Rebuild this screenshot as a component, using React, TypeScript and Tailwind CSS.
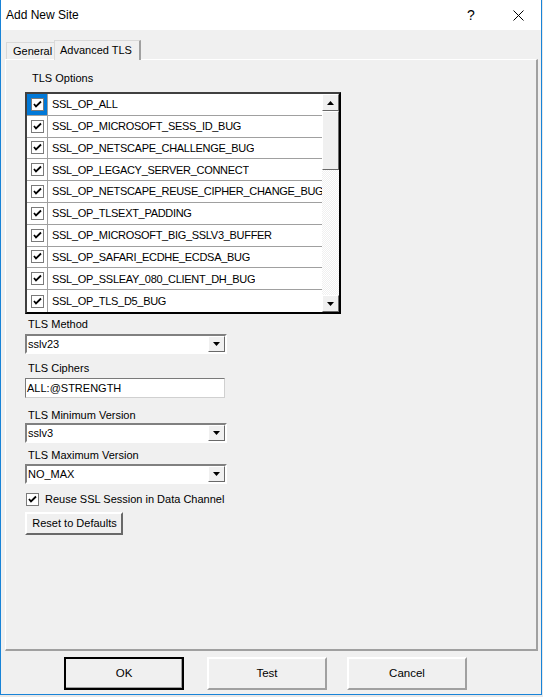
import React from "react";

const options = [
  "SSL_OP_ALL",
  "SSL_OP_MICROSOFT_SESS_ID_BUG",
  "SSL_OP_NETSCAPE_CHALLENGE_BUG",
  "SSL_OP_LEGACY_SERVER_CONNECT",
  "SSL_OP_NETSCAPE_REUSE_CIPHER_CHANGE_BUG",
  "SSL_OP_TLSEXT_PADDING",
  "SSL_OP_MICROSOFT_BIG_SSLV3_BUFFER",
  "SSL_OP_SAFARI_ECDHE_ECDSA_BUG",
  "SSL_OP_SSLEAY_080_CLIENT_DH_BUG",
  "SSL_OP_TLS_D5_BUG",
];

function Check() {
  return (
    <div className="w-[13px] h-[13px] border border-[#7a7a7a] bg-white flex items-center justify-center">
      <svg width="9" height="9" viewBox="0 0 9 9">
        <path d="M1 4 L3 6.5 L8 1.5" stroke="#000" strokeWidth="1.8" fill="none" />
      </svg>
    </div>
  );
}

function Arrow({ up }: { up?: boolean }) {
  return (
    <svg width="7" height="4" viewBox="0 0 7 4">
      <path d={up ? "M0 4 L3.5 0 L7 4 Z" : "M0 0 L7 0 L3.5 4 Z"} fill="#000" />
    </svg>
  );
}

function Combo({ value }: { value: string }) {
  return (
    <div className="w-[202px] h-[20px] border-2 border-t-[#808080] border-l-[#808080] border-b-white border-r-white bg-white flex items-center">
      <div className="flex-1 text-[11px] pl-[1px] leading-none">{value}</div>
      <div className="w-[17px] h-[16px] bg-[#f0f0f0] border border-t-white border-l-white border-b-[#696969] border-r-[#696969] flex items-center justify-center">
        <Arrow />
      </div>
    </div>
  );
}

function Label({ children }: { children: React.ReactNode }) {
  return <div className="text-[11px] leading-[14px] pl-[3px]">{children}</div>;
}

function DlgButton({ label, primary }: { label: string; primary?: boolean }) {
  return (
    <button
      type="button"
      className={
        primary
          ? "w-[120px] h-[33px] bg-[#f0f0f0] border-2 border-black text-[11.5px] shadow-[inset_-1px_-1px_0_#a0a0a0]"
          : "w-[120px] h-[33px] bg-[#f0f0f0] border-2 border-t-white border-l-white border-b-[#a0a0a0] border-r-[#a0a0a0] text-[11.5px]"
      }
    >
      {label}
    </button>
  );
}

export default function App() {
  return (
    <div className="w-[543px] h-[697px] bg-[#e8e8e8] overflow-hidden text-black" style={{ fontFamily: '"Liberation Sans", Arial, sans-serif' }}>
      <div className="w-[542px] h-[695px] border-x border-b border-[#1883d7] bg-[#f0f0f0] flex flex-col">
        {/* title bar */}
        <div className="h-[30px] bg-white flex items-center">
          <div className="pl-[5px] text-[12px] flex-1">Add New Site</div>
          <div className="w-[46px] text-[14px] text-center pr-[2px]">?</div>
          <div className="w-[46px] flex justify-center">
            <svg width="11" height="11" viewBox="0 0 11 11">
              <path d="M0.5 0.5 L10.5 10.5 M10.5 0.5 L0.5 10.5" stroke="#000" strokeWidth="1" />
            </svg>
          </div>
        </div>

        {/* tabs */}
        <div className="flex items-end pl-[5px] pt-[9px] h-[29px]">
          <div className="h-[17px] w-[48px] border-t border-l border-[#d9d9d9] bg-[#f0f0f0] text-[11px] leading-[17px] pl-[6px]">
            General
          </div>
          <div className="h-[20px] w-[87px] border-t border-l border-r-2 border-t-[#d9d9d9] border-l-[#d9d9d9] border-r-[#a0a0a0] bg-[#f0f0f0] text-[11px] leading-[18px] pl-[5px] relative top-[1px]">
            Advanced TLS
          </div>
        </div>

        {/* panel */}
        <div className="ml-[4px] w-[533px] h-[592px] border border-t-[#ffffff] border-l-[#ffffff] border-r-2 border-b-2 border-r-[#a0a0a0] border-b-[#a0a0a0] px-[19px] pt-[11px] flex flex-col">
          <div className="pl-[4px]"><Label>TLS Options</Label></div>
          <div className="mt-[7px] w-[316px] h-[222px] border-2 border-t-[#404040] border-l-[#404040] border-b-black border-r-black bg-white flex">
            <div className="flex-1 min-w-0 flex flex-col">
              {options.map((o, i) => (
                <div key={o} className="h-[22px] flex items-center border-b border-[#a0a0a0] last:border-b-0">
                  <div className={i === 0 ? "w-[20px] shrink-0 h-full bg-[#0078d7] flex items-center justify-center" : "w-[20px] shrink-0 h-full flex items-center justify-center"}>
                    <Check />
                  </div>
                  <div className="h-full border-l border-[#a0a0a0]" />
                  <div className="pl-[4px] text-[11px] tracking-[-0.3px] whitespace-nowrap overflow-hidden">{o}</div>
                </div>
              ))}
            </div>
            <div className="w-[17px] shrink-0 flex flex-col bg-[repeating-conic-gradient(#f0f0f0_0_25%,#ffffff_0_50%)] bg-[length:2px_2px]">
              <div className="h-[17px] bg-[#f0f0f0] border border-t-white border-l-white border-b-[#696969] border-r-[#696969] flex items-center justify-center">
                <Arrow up />
              </div>
              <div className="h-[59px] bg-[#f0f0f0] border border-t-white border-l-white border-b-[#696969] border-r-[#696969]" />
              <div className="flex-1" />
              <div className="h-[17px] bg-[#f0f0f0] border border-t-white border-l-white border-b-[#696969] border-r-[#696969] flex items-center justify-center">
                <Arrow />
              </div>
            </div>
          </div>

          <div className="mt-[3px]"><Label>TLS Method</Label></div>
          <div className="mt-[3px]"><Combo value="sslv23" /></div>

          <div className="mt-[7px]"><Label>TLS Ciphers</Label></div>
          <div className="mt-[3px] w-[200px] h-[20px] border border-t-[#7a7a7a] border-l-[#7a7a7a] border-b-[#d0d0d0] border-r-[#d0d0d0] bg-white text-[11px] leading-[18px] pl-[1px]">
            ALL:@STRENGTH
          </div>

          <div className="mt-[10px]"><Label>TLS Minimum Version</Label></div>
          <div className="mt-[1px]"><Combo value="sslv3" /></div>

          <div className="mt-[5px]"><Label>TLS Maximum Version</Label></div>
          <div className="mt-[2px]"><Combo value="NO_MAX" /></div>

          <div className="mt-[7px] flex items-center pl-[1px]">
            <Check />
            <div className="pl-[6px] text-[11px]">Reuse SSL Session in Data Channel</div>
          </div>

          <button
            type="button"
            className="mt-[4px] w-[98px] h-[23px] bg-[#f0f0f0] border-2 border-t-white border-l-white border-b-[#696969] border-r-[#696969] text-[11px] pl-[1px]"
          >
            Reset to Defaults
          </button>
        </div>

        {/* bottom buttons */}
        <div className="flex pt-[6px] pl-[63px] gap-[23px]">
          <DlgButton label="OK" primary />
          <DlgButton label="Test" />
          <div className="ml-[-3px]"><DlgButton label="Cancel" /></div>
        </div>
      </div>
    </div>
  );
}
